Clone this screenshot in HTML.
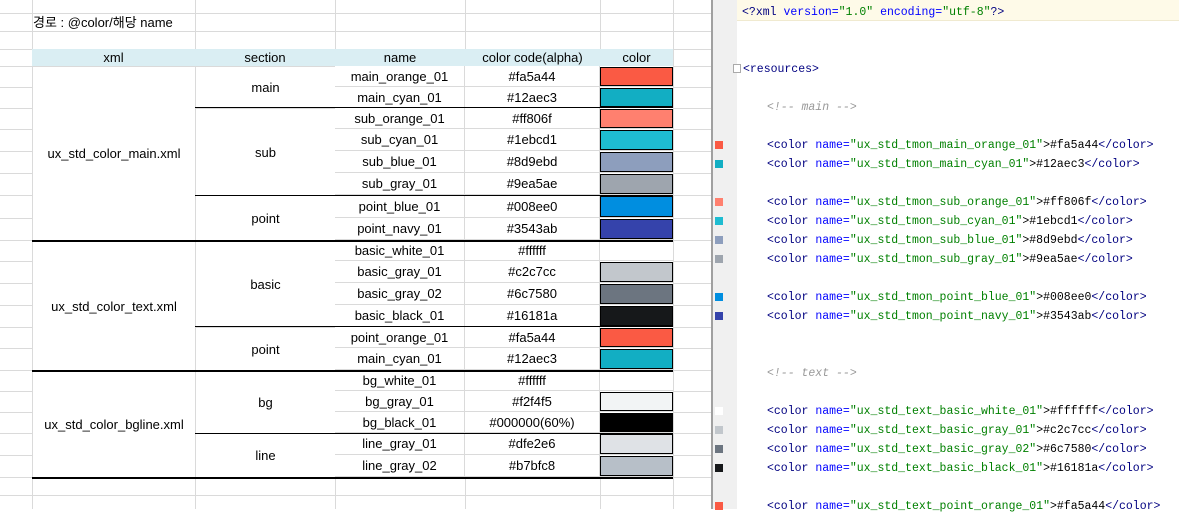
<!DOCTYPE html>
<html><head><meta charset="utf-8"><style>
*{margin:0;padding:0;box-sizing:border-box}
body{width:1179px;height:509px;overflow:hidden;background:#fff;position:relative;font-family:"Liberation Sans","Noto Sans CJK KR",sans-serif;font-size:13px;color:#000}
.h{position:absolute;left:0;width:711px;height:1px;background:#dadada}
.v{position:absolute;top:0;height:509px;width:1px;background:#dadada}
.c{position:absolute;background:#fff;display:flex;align-items:center;justify-content:center;white-space:nowrap}
.r{position:absolute;left:335px;width:338px;display:flex}
.r div{display:flex;align-items:center;justify-content:center;border-right:1px solid #dadada;border-bottom:1px solid #dadada;background:#fff;height:100%}
.n{width:130px}.k{width:135px}
.s{width:73px;position:relative;border-right:none!important}
.s i{position:absolute;left:0;top:1px;right:0;bottom:0;border:1px solid #000}
.bk{position:absolute;height:2px;background:#000}
.tk{position:absolute;height:1px;background:#000}
.code{position:absolute;left:0;font-family:"Liberation Mono",monospace;font-size:11.5px;height:19px;line-height:19px;white-space:pre;color:#000}
.t{color:#000080}.a{color:#0000ff}.g{color:#008000}.cm{color:#999;font-style:italic}
.sw{position:absolute;left:715px;width:8px;height:8px}
</style></head><body>
<!-- grid -->
<div class="h" style="top:13px"></div><div class="h" style="top:31px"></div><div class="h" style="top:49px"></div><div class="h" style="top:66px"></div>
<div class="h" style="top:87px"></div><div class="h" style="top:108px"></div><div class="h" style="top:129px"></div><div class="h" style="top:151px"></div>
<div class="h" style="top:173px"></div><div class="h" style="top:195px"></div><div class="h" style="top:218px"></div><div class="h" style="top:240px"></div>
<div class="h" style="top:261px"></div><div class="h" style="top:283px"></div><div class="h" style="top:305px"></div><div class="h" style="top:327px"></div>
<div class="h" style="top:348px"></div><div class="h" style="top:370px"></div><div class="h" style="top:391px"></div><div class="h" style="top:412px"></div>
<div class="h" style="top:433px"></div><div class="h" style="top:455px"></div><div class="h" style="top:477px"></div><div class="h" style="top:495px"></div>
<div class="v" style="left:32px"></div><div class="v" style="left:195px"></div><div class="v" style="left:335px"></div><div class="v" style="left:465px"></div><div class="v" style="left:600px"></div><div class="v" style="left:673px"></div>

<div style="position:absolute;left:33px;top:14px;height:17px;line-height:17px;font-size:13px">경로 : @color/해당 name</div>

<!-- header -->
<div class="c" style="left:32px;top:49px;width:641px;height:17px;background:#daeef3"></div>
<div class="c" style="left:32px;top:49px;width:163px;height:17px;background:transparent">xml</div>
<div class="c" style="left:195px;top:49px;width:140px;height:17px;background:transparent">section</div>
<div class="c" style="left:335px;top:49px;width:130px;height:17px;background:transparent">name</div>
<div class="c" style="left:465px;top:49px;width:135px;height:17px;background:transparent">color code(alpha)</div>
<div class="c" style="left:600px;top:49px;width:73px;height:17px;background:transparent">color</div>

<!-- xml -->
<div class="c" style="left:33px;top:67px;width:162px;height:173px">ux_std_color_main.xml</div>
<div class="c" style="left:33px;top:242px;width:162px;height:128px">ux_std_color_text.xml</div>
<div class="c" style="left:33px;top:372px;width:162px;height:105px">ux_std_color_bgline.xml</div>
<!-- section -->
<div class="c" style="left:196px;top:67px;width:139px;height:41px">main</div>
<div class="c" style="left:196px;top:109px;width:139px;height:86px">sub</div>
<div class="c" style="left:196px;top:196px;width:139px;height:44px">point</div>
<div class="c" style="left:196px;top:242px;width:139px;height:85px">basic</div>
<div class="c" style="left:196px;top:328px;width:139px;height:42px">point</div>
<div class="c" style="left:196px;top:372px;width:139px;height:61px">bg</div>
<div class="c" style="left:196px;top:434px;width:139px;height:43px">line</div>

<!-- rows -->
<div class="r" style="top:66px;height:21px"><div class="n">main_orange_01</div><div class="k">#fa5a44</div><div class="s"><i style="background:#fa5a44"></i></div></div>
<div class="r" style="top:87px;height:21px"><div class="n">main_cyan_01</div><div class="k">#12aec3</div><div class="s"><i style="background:#12aec3"></i></div></div>
<div class="r" style="top:108px;height:21px"><div class="n">sub_orange_01</div><div class="k">#ff806f</div><div class="s"><i style="background:#ff806f"></i></div></div>
<div class="r" style="top:129px;height:22px"><div class="n">sub_cyan_01</div><div class="k">#1ebcd1</div><div class="s"><i style="background:#1ebcd1"></i></div></div>
<div class="r" style="top:151px;height:22px"><div class="n">sub_blue_01</div><div class="k">#8d9ebd</div><div class="s"><i style="background:#8d9ebd"></i></div></div>
<div class="r" style="top:173px;height:22px"><div class="n">sub_gray_01</div><div class="k">#9ea5ae</div><div class="s"><i style="background:#9ea5ae"></i></div></div>
<div class="r" style="top:195px;height:23px"><div class="n">point_blue_01</div><div class="k">#008ee0</div><div class="s"><i style="background:#008ee0"></i></div></div>
<div class="r" style="top:218px;height:22px"><div class="n">point_navy_01</div><div class="k">#3543ab</div><div class="s"><i style="background:#3543ab"></i></div></div>
<div class="r" style="top:240px;height:21px"><div class="n">basic_white_01</div><div class="k">#ffffff</div><div class="s" style="border-bottom:1px solid #dadada"></div></div>
<div class="r" style="top:261px;height:22px"><div class="n">basic_gray_01</div><div class="k">#c2c7cc</div><div class="s"><i style="background:#c2c7cc"></i></div></div>
<div class="r" style="top:283px;height:22px"><div class="n">basic_gray_02</div><div class="k">#6c7580</div><div class="s"><i style="background:#6c7580"></i></div></div>
<div class="r" style="top:305px;height:22px"><div class="n">basic_black_01</div><div class="k">#16181a</div><div class="s"><i style="background:#16181a"></i></div></div>
<div class="r" style="top:327px;height:21px"><div class="n">point_orange_01</div><div class="k">#fa5a44</div><div class="s"><i style="background:#fa5a44"></i></div></div>
<div class="r" style="top:348px;height:22px"><div class="n">main_cyan_01</div><div class="k">#12aec3</div><div class="s"><i style="background:#12aec3"></i></div></div>
<div class="r" style="top:370px;height:21px"><div class="n">bg_white_01</div><div class="k">#ffffff</div><div class="s" style="border-bottom:1px solid #dadada"></div></div>
<div class="r" style="top:391px;height:21px"><div class="n">bg_gray_01</div><div class="k">#f2f4f5</div><div class="s"><i style="background:#f2f4f5"></i></div></div>
<div class="r" style="top:412px;height:21px"><div class="n">bg_black_01</div><div class="k">#000000(60%)</div><div class="s"><i style="background:#000"></i></div></div>
<div class="r" style="top:433px;height:22px"><div class="n">line_gray_01</div><div class="k">#dfe2e6</div><div class="s"><i style="background:#dfe2e6"></i></div></div>
<div class="r" style="top:455px;height:22px"><div class="n">line_gray_02</div><div class="k">#b7bfc8</div><div class="s"><i style="background:#b7bfc8"></i></div></div>

<!-- borders -->
<div class="tk" style="left:195px;width:478px;top:107px"></div>
<div class="tk" style="left:195px;width:478px;top:195px"></div>
<div class="bk" style="left:32px;width:641px;top:240px"></div>
<div class="tk" style="left:195px;width:478px;top:326px"></div>
<div class="bk" style="left:32px;width:641px;top:370px"></div>
<div class="tk" style="left:195px;width:478px;top:433px"></div>
<div class="bk" style="left:32px;width:641px;top:477px"></div>

<!-- editor -->
<div style="position:absolute;left:711px;top:0;width:2px;height:509px;background:#a0a0a0"></div>
<div style="position:absolute;left:713px;top:0;width:24px;height:509px;background:#f0f0f0"></div>
<div style="position:absolute;left:737px;top:0;width:442px;height:21px;background:#fefae8;border-bottom:1px solid #f0ead0"></div>
<div style="position:absolute;left:733px;top:64px;width:8px;height:9px;border:1px solid #aaa;background:#fff"></div>

<div class="code" style="top:3px;left:742px"><span class="t">&lt;?</span><span class="t">xml</span> <span class="a">version=</span><span class="g">"1.0"</span> <span class="a">encoding=</span><span class="g">"utf-8"</span><span class="t">?&gt;</span></div>
<div class="code" style="top:60px;left:743px"><span class="t">&lt;resources&gt;</span></div>
<div class="code cm" style="top:98px;left:767px">&lt;!-- main --&gt;</div>
<div class="code" style="top:136px;left:767px"><span class="t">&lt;color</span> <span class="a">name=</span><span class="g">"ux_std_tmon_main_orange_01"</span>&gt;#fa5a44<span class="t">&lt;/color&gt;</span></div>
<div class="code" style="top:155px;left:767px"><span class="t">&lt;color</span> <span class="a">name=</span><span class="g">"ux_std_tmon_main_cyan_01"</span>&gt;#12aec3<span class="t">&lt;/color&gt;</span></div>
<div class="code" style="top:193px;left:767px"><span class="t">&lt;color</span> <span class="a">name=</span><span class="g">"ux_std_tmon_sub_orange_01"</span>&gt;#ff806f<span class="t">&lt;/color&gt;</span></div>
<div class="code" style="top:212px;left:767px"><span class="t">&lt;color</span> <span class="a">name=</span><span class="g">"ux_std_tmon_sub_cyan_01"</span>&gt;#1ebcd1<span class="t">&lt;/color&gt;</span></div>
<div class="code" style="top:231px;left:767px"><span class="t">&lt;color</span> <span class="a">name=</span><span class="g">"ux_std_tmon_sub_blue_01"</span>&gt;#8d9ebd<span class="t">&lt;/color&gt;</span></div>
<div class="code" style="top:250px;left:767px"><span class="t">&lt;color</span> <span class="a">name=</span><span class="g">"ux_std_tmon_sub_gray_01"</span>&gt;#9ea5ae<span class="t">&lt;/color&gt;</span></div>
<div class="code" style="top:288px;left:767px"><span class="t">&lt;color</span> <span class="a">name=</span><span class="g">"ux_std_tmon_point_blue_01"</span>&gt;#008ee0<span class="t">&lt;/color&gt;</span></div>
<div class="code" style="top:307px;left:767px"><span class="t">&lt;color</span> <span class="a">name=</span><span class="g">"ux_std_tmon_point_navy_01"</span>&gt;#3543ab<span class="t">&lt;/color&gt;</span></div>
<div class="code cm" style="top:364px;left:767px">&lt;!-- text --&gt;</div>
<div class="code" style="top:402px;left:767px"><span class="t">&lt;color</span> <span class="a">name=</span><span class="g">"ux_std_text_basic_white_01"</span>&gt;#ffffff<span class="t">&lt;/color&gt;</span></div>
<div class="code" style="top:421px;left:767px"><span class="t">&lt;color</span> <span class="a">name=</span><span class="g">"ux_std_text_basic_gray_01"</span>&gt;#c2c7cc<span class="t">&lt;/color&gt;</span></div>
<div class="code" style="top:440px;left:767px"><span class="t">&lt;color</span> <span class="a">name=</span><span class="g">"ux_std_text_basic_gray_02"</span>&gt;#6c7580<span class="t">&lt;/color&gt;</span></div>
<div class="code" style="top:459px;left:767px"><span class="t">&lt;color</span> <span class="a">name=</span><span class="g">"ux_std_text_basic_black_01"</span>&gt;#16181a<span class="t">&lt;/color&gt;</span></div>
<div class="code" style="top:497px;left:767px"><span class="t">&lt;color</span> <span class="a">name=</span><span class="g">"ux_std_text_point_orange_01"</span>&gt;#fa5a44<span class="t">&lt;/color&gt;</span></div>

<div class="sw" style="top:141px;background:#fa5a44"></div>
<div class="sw" style="top:160px;background:#12aec3"></div>
<div class="sw" style="top:198px;background:#ff806f"></div>
<div class="sw" style="top:217px;background:#1ebcd1"></div>
<div class="sw" style="top:236px;background:#8d9ebd"></div>
<div class="sw" style="top:255px;background:#9ea5ae"></div>
<div class="sw" style="top:293px;background:#008ee0"></div>
<div class="sw" style="top:312px;background:#3543ab"></div>
<div class="sw" style="top:407px;background:#ffffff"></div>
<div class="sw" style="top:426px;background:#c2c7cc"></div>
<div class="sw" style="top:445px;background:#6c7580"></div>
<div class="sw" style="top:464px;background:#16181a"></div>
<div class="sw" style="top:502px;background:#fa5a44"></div>
</body></html>
